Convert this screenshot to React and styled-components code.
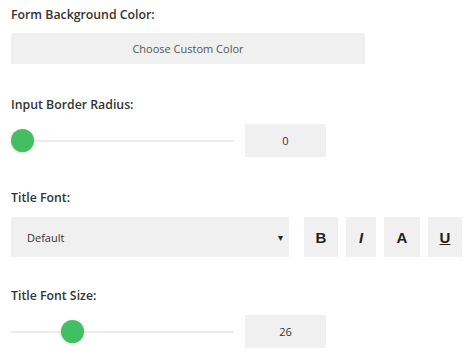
import React from 'react';
import styled, { createGlobalStyle } from 'styled-components';

const GlobalStyle = createGlobalStyle`
  body {
    margin: 0;
    background: #fff;
    font-family: 'Open Sans', 'Noto Sans', sans-serif;
  }
`;

export default function App() {
  return (
    <>
      <GlobalStyle />
      <Panel>
        <Field>
          <Label>Form Background Color:</Label>
          <ColorButton>Choose Custom Color</ColorButton>
        </Field>

        <Field>
          <Label>Input Border Radius:</Label>
          <Slider value={0} max={104} />
        </Field>

        <Field>
          <Label>Title Font:</Label>
          <FontRow>
            <Select>
              <span>Default</span>
              <Caret>▾</Caret>
            </Select>
            <StyleButton $w={34}>B</StyleButton>
            <StyleButton $w={30} $italic>I</StyleButton>
            <StyleButton $w={36}>A</StyleButton>
            <StyleButton $w={34} $underline>U</StyleButton>
          </FontRow>
        </Field>

        <Field $tight>
          <Label>Title Font Size:</Label>
          <Slider value={26} max={104} />
        </Field>
      </Panel>
    </>
  );
}

function Slider({ value, max }) {
  const ratio = value / max;
  return (
    <SliderRow>
      <Track>
        <Thumb style={{ left: `calc((100% - 23px) * ${ratio})` }} />
      </Track>
      <ValueBox>{value}</ValueBox>
    </SliderRow>
  );
}

const Panel = styled.div`
  padding: 6px 0 0 11px;
  display: flex;
  flex-direction: column;
  gap: 32px;
`;

const Field = styled.div`
  display: flex;
  flex-direction: column;
  gap: 9px;
  margin-top: ${(p) => (p.$tight ? '-2px' : '0')};
`;

const Label = styled.label`
  font-size: 12.3px;
  font-weight: 600;
  line-height: 18px;
  color: #333;
`;

const ColorButton = styled.div`
  width: 354px;
  height: 31px;
  background: #f0f0f0;
  display: flex;
  align-items: center;
  justify-content: center;
  font-size: 11px;
  color: #555;
`;

const SliderRow = styled.div`
  display: flex;
  align-items: center;
  gap: 11px;
  margin-top: 1px;
`;

const Track = styled.div`
  position: relative;
  width: 223px;
  height: 2px;
  background: #ececec;
`;

const Thumb = styled.div`
  position: absolute;
  top: -11px;
  width: 23px;
  height: 23px;
  border-radius: 50%;
  background: #41bf62;
  box-shadow: 0 1px 3px rgba(0, 0, 0, 0.18);
`;

const ValueBox = styled.div`
  width: 81px;
  height: 33px;
  background: #f0f0f0;
  display: flex;
  align-items: center;
  justify-content: center;
  font-size: 11px;
  color: #333;
`;

const FontRow = styled.div`
  display: flex;
  align-items: center;
  margin-top: 1px;
`;

const Select = styled.div`
  width: 278px;
  height: 40px;
  box-sizing: border-box;
  padding: 0 6px 0 16px;
  margin-right: 15px;
  background: #f0f0f0;
  display: flex;
  align-items: center;
  justify-content: space-between;
  font-size: 11px;
  color: #333;
`;

const Caret = styled.span`
  font-size: 10px;
  color: #222;
`;

const StyleButton = styled.div`
  width: ${(p) => p.$w}px;
  height: 40px;
  margin-right: 8px;
  background: #f0f0f0;
  display: flex;
  align-items: center;
  justify-content: center;
  font-family: 'Liberation Sans', Arial, sans-serif;
  font-size: 15px;
  font-weight: 700;
  color: #222;
  font-style: ${(p) => (p.$italic ? 'italic' : 'normal')};
  text-decoration: ${(p) => (p.$underline ? 'underline' : 'none')};
`;
